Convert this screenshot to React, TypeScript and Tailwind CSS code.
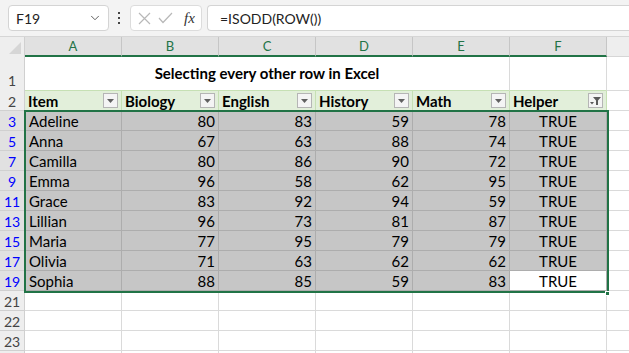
import { ChevronDown } from "lucide-react";

const data = [
  { n: "3", item: "Adeline", v: [80, 83, 59, 78] },
  { n: "5", item: "Anna", v: [67, 63, 88, 74] },
  { n: "7", item: "Camilla", v: [80, 86, 90, 72] },
  { n: "9", item: "Emma", v: [96, 58, 62, 95] },
  { n: "11", item: "Grace", v: [83, 92, 94, 59] },
  { n: "13", item: "Lillian", v: [96, 73, 81, 87] },
  { n: "15", item: "Maria", v: [77, 95, 79, 79] },
  { n: "17", item: "Olivia", v: [71, 63, 62, 62] },
  { n: "19", item: "Sophia", v: [88, 85, 59, 83] },
];

const heads = ["Item", "Biology", "English", "History", "Math", "Helper"];

function FilterBtn({ active }: { active?: boolean }) {
  return (
    <div className="absolute right-[3px] top-[2px] flex h-[15px] w-[15px] items-center justify-center border border-[#b5b5b5] bg-[#f4f4f4]">
      {active ? (
        <svg width="11" height="10" viewBox="0 0 11 10">
          <path d="M0 6 L4 6 L2 8.5 Z" fill="#5a5a5a" />
          <path d="M3 1 H11 L8 4.5 V9 H6 V4.5 Z" fill="#5a5a5a" />
        </svg>
      ) : (
        <svg width="7" height="4" viewBox="0 0 7 4">
          <path d="M0 0 H7 L3.5 4 Z" fill="#606060" />
        </svg>
      )}
    </div>
  );
}

function RowNum({ n, sel }: { n: string; sel?: boolean }) {
  return (
    <div
      className={`flex w-[25px] shrink-0 items-center justify-center border-b border-r border-[#d0d0d0] pt-[2px] text-[14px] ${
        sel ? "bg-[#e1e1e1] text-[#0000ff]" : "bg-[#eeeeee] text-[#444]"
      }`}
    >
      {n}
    </div>
  );
}

function EmptyRow({ n }: { n: string }) {
  return (
    <div className="flex h-[20px]">
      <RowNum n={n} />
      {[0, 1, 2, 3, 4, 5].map((i) => (
        <div key={i} className="w-[97px] shrink-0 border-b border-r border-[#dadada]" />
      ))}
      <div className="flex-1 border-b border-[#dadada]" />
    </div>
  );
}

export default function App() {
  return (
    <div className="h-[353px] w-[629px] overflow-hidden bg-white font-['Lato',sans-serif] text-black">
      {/* formula bar */}
      <div className="flex h-[37px] items-center border-b border-[#d6d6d6] bg-[#f3f3f3] pl-[8px]">
        <div className="flex h-[26px] w-[101px] shrink-0 items-center justify-between rounded-[4px] border border-[#d4d4d4] bg-white pl-[7px] pr-[6px] text-[14px] text-[#222]">
          <span>F19</span>
          <ChevronDown size={14} strokeWidth={1.6} className="text-[#555]" />
        </div>
        <div className="ml-[9px] flex h-[12px] w-[2px] shrink-0 flex-col justify-between">
          <span className="h-[2px] w-[2px] bg-[#444]" />
          <span className="h-[2px] w-[2px] bg-[#444]" />
          <span className="h-[2px] w-[2px] bg-[#444]" />
        </div>
        <div className="ml-[10px] flex h-[26px] w-[72px] shrink-0 items-center gap-[7px] rounded-[4px] border border-[#dcdcdc] bg-white pl-[7px]">
          <svg width="13" height="13" viewBox="0 0 13 13">
            <path d="M1 1 L12 12 M12 1 L1 12" stroke="#b8b8b8" strokeWidth="1.2" />
          </svg>
          <svg width="15" height="12" viewBox="0 0 15 12">
            <path d="M1 6 L5 10.5 L14 1" stroke="#b8b8b8" strokeWidth="1.2" fill="none" />
          </svg>
          <span className="ml-[4px] font-['Liberation_Serif',serif] text-[15px] italic text-[#333]">fx</span>
        </div>
        <div className="ml-[5px] flex h-[26px] flex-1 items-center rounded-l-[4px] border border-r-0 border-[#d4d4d4] bg-white pl-[12px] text-[14px] text-[#222]">
          =ISODD(ROW())
        </div>
      </div>

      {/* sheet */}
      <div className="relative">
        {/* column headers */}
        <div className="flex h-[20px] text-[13px]">
          <div className="relative w-[25px] shrink-0 border-r border-[#d0d0d0] bg-[#eeeeee]">
            <svg className="absolute bottom-[3px] right-[3px]" width="12" height="12" viewBox="0 0 12 12">
              <path d="M12 0 V12 H0 Z" fill="#d6d6d6" />
            </svg>
          </div>
          {["A", "B", "C", "D", "E", "F"].map((c) => (
            <div
              key={c}
              className="flex w-[97px] shrink-0 items-center justify-center border-b-2 border-r border-b-[#217346] border-r-[#c6c6c6] bg-[#e1e1e1] pt-[1px] text-[#217346]"
            >
              {c}
            </div>
          ))}
          <div className="flex-1 border-b border-[#d6d6d6] bg-[#eeeeee]" />
        </div>

        {/* row 1 */}
        <div className="flex h-[34px]">
          <div className="flex w-[25px] shrink-0 items-end justify-center border-r border-[#d0d0d0] bg-[#eeeeee] pb-[0px] text-[14px] text-[#444]">
            1
          </div>
          <div className="flex w-[485px] shrink-0 items-center justify-center border-b border-r border-b-[#c6e0b4] border-r-[#dadada] pb-[1px] text-[15px] font-bold">
            Selecting every other row in Excel
          </div>
          <div className="w-[97px] shrink-0 border-b border-r border-b-[#c6e0b4] border-r-[#dadada]" />
          <div className="flex-1 border-b border-[#dadada]" />
        </div>

        {/* row 2 header */}
        <div className="flex h-[20px]">
          <RowNum n="2" />
          {heads.map((h, i) => (
            <div
              key={h}
              className="relative flex w-[97px] shrink-0 items-center border-b border-r border-[#c6e0b4] bg-[#e2efda] pl-[3px] pt-[2px] text-[15px] font-bold"
            >
              {h}
              <FilterBtn active={i === 5} />
            </div>
          ))}
          <div className="flex-1 border-b border-[#dadada]" />
        </div>

        {/* data rows */}
        {data.map((r, ri) => (
          <div key={r.n} className="flex h-[20px] text-[15px]">
            <RowNum n={r.n} sel />
            <div className="flex w-[97px] shrink-0 items-center border-b border-r border-[#adadad] bg-[#c6c6c6] pl-[4px] pt-[2px]">
              {r.item}
            </div>
            {r.v.map((x, i) => (
              <div
                key={i}
                className="flex w-[97px] shrink-0 items-center justify-end border-b border-r border-[#adadad] bg-[#c6c6c6] pr-[3px] pt-[2px]"
              >
                {x}
              </div>
            ))}
            <div
              className={`flex w-[97px] shrink-0 items-center justify-center border-b border-r border-[#adadad] pt-[2px] ${
                ri === data.length - 1 ? "bg-white" : "bg-[#c6c6c6]"
              }`}
            >
              TRUE
            </div>
            <div className="flex-1 border-b border-[#dadada]" />
          </div>
        ))}

        <EmptyRow n="21" />
        <EmptyRow n="22" />
        <EmptyRow n="23" />
        <EmptyRow n="" />

        {/* selection outline */}
        <div className="pointer-events-none absolute left-[24px] top-[73px] h-[183px] w-[585px] border-2 border-[#217346]" />
        <div className="pointer-events-none absolute left-[605px] top-[254px] h-[5px] w-[5px] border border-white bg-[#217346]" />
      </div>
    </div>
  );
}
